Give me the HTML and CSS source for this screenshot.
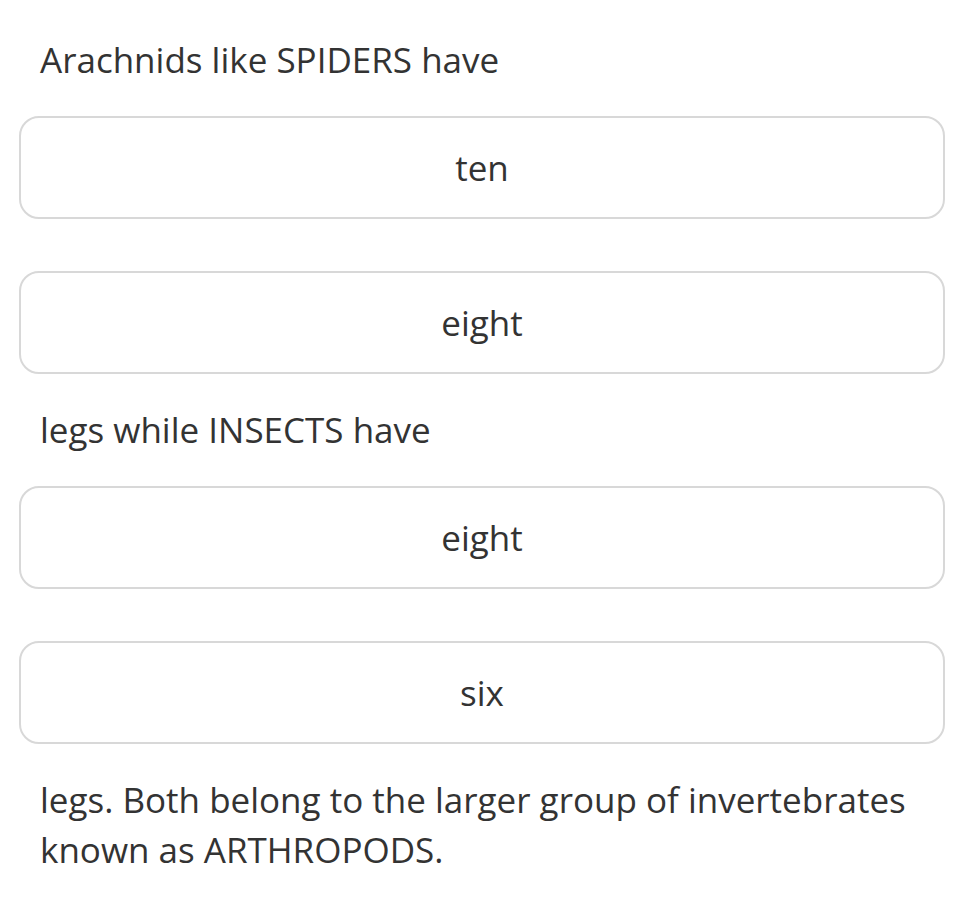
FILE: index.html
```html
<!DOCTYPE html>
<html lang="en">

<head>
    <meta charset="UTF-8">
    <meta name="viewport" content="width=device-width, initial-scale=1.0">
    <title>Spiders and Insects</title>
    <link rel="stylesheet" href="styles.css">
</head>

<body>
    <div class="quiz">
        <p class="text">Arachnids like SPIDERS have</p>
        <div class="choices">
            <button class="choice">ten</button>
            <button class="choice">eight</button>
        </div>
        <p class="text">legs while INSECTS have</p>
        <div class="choices">
            <button class="choice">eight</button>
            <button class="choice">six</button>
        </div>
        <p class="text">legs. Both belong to the larger group of invertebrates known as ARTHROPODS.</p>
    </div>
</body>

</html>
```

FILE: styles.css
```css
body {
    font-family: "Open Sans", Arial, sans-serif;
    background-color: #ffffff;
    color: #333333;
    margin: 0;
    padding: 0;
}

.quiz {
    display: flex;
    flex-direction: column;
    gap: 31px;
    padding: 35px 12px 20px 19px;
}

.text {
    margin: 0;
    padding: 0 21px;
    font-size: 35px;
    line-height: 50px;
}

.choices {
    display: flex;
    flex-direction: column;
    gap: 52px;
}

.choice {
    height: 103px;
    font-family: inherit;
    font-size: 35px;
    color: #333333;
    background: #ffffff;
    border: 2px solid #d8d8d8;
    border-radius: 20px;
    cursor: pointer;
}
```
